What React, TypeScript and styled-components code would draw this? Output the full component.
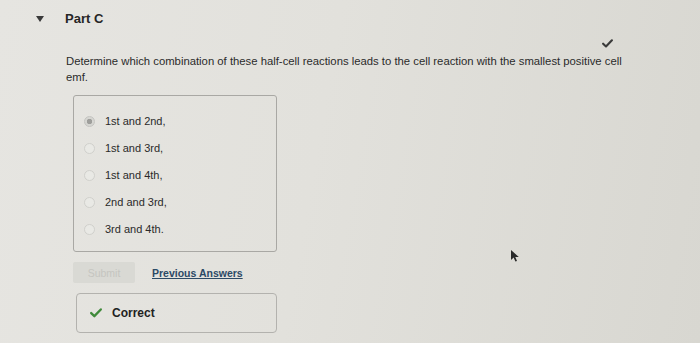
import styled, { createGlobalStyle } from "styled-components";

const Global = createGlobalStyle`
  html, body { margin: 0; padding: 0; }
  body {
    width: 700px;
    height: 343px;
    overflow: hidden;
    font-family: "Liberation Sans", Arial, sans-serif;
    background: linear-gradient(100deg, #e6e5e1 0%, #e2e1dc 45%, #d8d7d1 100%);
  }
`;

const Page = styled.div`
  position: relative;
  width: 700px;
  height: 343px;
  box-sizing: border-box;
  padding: 10px 0 0 36px;
  color: #2a2a2a;
`;

const Header = styled.div`
  display: flex;
  align-items: center;
  gap: 21px;
  height: 17px;
`;

const Caret = styled.span`
  width: 0;
  height: 0;
  border-left: 4.5px solid transparent;
  border-right: 4.5px solid transparent;
  border-top: 6px solid #3a3a3a;
`;

const Title = styled.h2`
  margin: 0;
  font-size: 13px;
  font-weight: bold;
  color: #262626;
`;

const Body = styled.div`
  padding-left: 30px;
`;

const DoneMark = styled.div`
  display: flex;
  justify-content: flex-end;
  width: 547px;
  height: 14px;
  margin-top: 12px;
`;

const Question = styled.p`
  margin: 0;
  width: 570px;
  font-size: 11.3px;
  line-height: 16px;
  color: #2b2b2b;
`;

const Choices = styled.div`
  margin: 10px 0 0 7px;
  width: 204px;
  height: 157px;
  box-sizing: border-box;
  border: 1.5px solid #a9a8a4;
  border-radius: 3px;
  padding: 17px 0 0 10px;
  display: flex;
  flex-direction: column;
  gap: 11px;
`;

const Choice = styled.label`
  display: flex;
  align-items: center;
  gap: 10px;
  height: 16px;
  font-size: 11px;
  color: #2a2a2a;
`;

const Radio = styled.span<{ $on?: boolean }>`
  width: 11px;
  height: 11px;
  border-radius: 50%;
  box-sizing: border-box;
  border: 1px solid ${(p) => (p.$on ? "#c4c4c1" : "#d0d0cc")};
  background: ${(p) =>
    p.$on
      ? "radial-gradient(circle, #9e9e9b 0 2.5px, #d6d6d2 3px)"
      : "#e9e9e5"};
`;

const Actions = styled.div`
  display: flex;
  align-items: center;
  gap: 17px;
  margin: 10px 0 0 7px;
`;

const Submit = styled.button`
  width: 62px;
  height: 21px;
  border: none;
  border-radius: 2px;
  background: #d9d9d4;
  color: #c5c5c0;
  font-family: inherit;
  font-size: 10.5px;
  padding: 0;
`;

const Previous = styled.a`
  font-size: 10.5px;
  font-weight: bold;
  color: #2c4a66;
  text-decoration: underline;
`;

const Feedback = styled.div`
  display: flex;
  align-items: center;
  gap: 10px;
  margin: 10px 0 0 10px;
  width: 201px;
  height: 40px;
  box-sizing: border-box;
  border: 1.5px solid #b3b2ae;
  border-radius: 4px;
  padding-left: 13px;
  font-size: 12px;
  font-weight: bold;
  color: #222;
`;

const Cursor = styled.svg`
  position: absolute;
  left: 510px;
  top: 249px;
`;

const Check = ({ color, size }: { color: string; size: number }) => (
  <svg width={size} height={size * 0.8} viewBox="0 0 12 10">
    <path d="M1 5.3 L4.3 8.5 L11 1.5" fill="none" stroke={color} strokeWidth="2.4" strokeLinecap="round" strokeLinejoin="round" />
  </svg>
);

const options = ["1st and 2nd,", "1st and 3rd,", "1st and 4th,", "2nd and 3rd,", "3rd and 4th."];

export default function App() {
  return (
    <Page>
      <Global />
      <Header>
        <Caret />
        <Title>Part C</Title>
      </Header>
      <Body>
        <DoneMark>
          <Check color="#3a3a3a" size={11} />
        </DoneMark>
        <Question>
          Determine which combination of these half-cell reactions leads to the cell reaction with the smallest positive cell emf.
        </Question>
        <Choices>
          {options.map((o, i) => (
            <Choice key={o}>
              <Radio $on={i === 0} />
              {o}
            </Choice>
          ))}
        </Choices>
        <Actions>
          <Submit>Submit</Submit>
          <Previous>Previous Answers</Previous>
        </Actions>
        <Feedback>
          <Check color="#3f8a3a" size={12} />
          Correct
        </Feedback>
      </Body>
      <Cursor width="10" height="14" viewBox="0 0 10 14">
        <path d="M1 1 L1 11 L3.6 8.6 L5.4 12.6 L7 11.9 L5.3 8 L8.8 8 Z" fill="#2a2a2a" />
      </Cursor>
    </Page>
  );
}
